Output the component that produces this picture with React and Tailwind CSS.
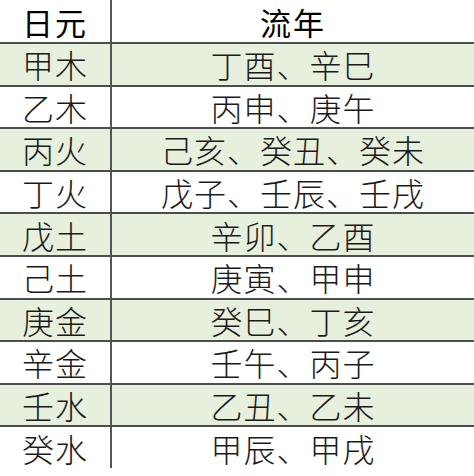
const ROWS = [
  ['甲木', '丁酉、辛巳'],
  ['乙木', '丙申、庚午'],
  ['丙火', '己亥、癸丑、癸未'],
  ['丁火', '戊子、壬辰、壬戌'],
  ['戊土', '辛卯、乙酉'],
  ['己土', '庚寅、甲申'],
  ['庚金', '癸巳、丁亥'],
  ['辛金', '壬午、丙子'],
  ['壬水', '乙丑、乙未'],
  ['癸水', '甲辰、甲戌'],
];

export default function App() {
  return (
    <div
      className="w-[474px] h-[476px] bg-white text-[#1a1a1a] overflow-hidden"
      style={{ fontFamily: '"Noto Sans CJK SC", "Noto Sans", sans-serif' }}
    >
      <div className="flex h-[42px] text-[31px] leading-none text-black">
        <div className="w-[112px] border-r-2 border-[#555] flex items-center justify-center tracking-[2px]">日元</div>
        <div className="flex-1 flex items-center justify-center tracking-[2px]">流年</div>
      </div>
      {ROWS.map(([day, years], i) => (
        <div
          key={day}
          className={`flex h-[42.6px] border-t-2 border-[#4d4d4d] text-[32px] leading-none font-light ${i % 2 === 0 ? 'bg-[#e7efdd]' : 'bg-white'}`}
        >
          <div className="w-[112px] border-r-2 border-[#555] flex items-center justify-center tracking-[1px]">{day}</div>
          <div className="flex-1 flex items-center justify-center tracking-[1px]">{years}</div>
        </div>
      ))}
    </div>
  );
}
